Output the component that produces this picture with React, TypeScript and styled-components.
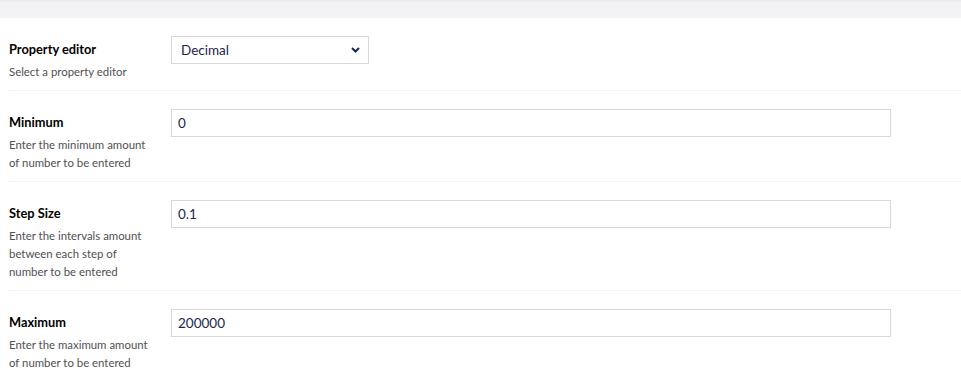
import React from "react";
import styled, { createGlobalStyle } from "styled-components";

const Global = createGlobalStyle`
  html, body { margin: 0; padding: 0; background: #fff; }
  body { font-family: Lato, "Open Sans", "Liberation Sans", sans-serif; color: #1b264f; }
  * { box-sizing: border-box; }
`;

const Page = styled.div`
  width: 961px;
  height: 380px;
  overflow: hidden;
  background: #fff;
`;

const TopBand = styled.div`
  height: 18px;
  background: #f3f3f5;
  border-top: 2px solid #ebebed;
`;

const Rows = styled.div`
  padding-left: 9px;
`;

const Row = styled.div`
  display: grid;
  grid-template-columns: 162px 720px;
  padding: 18px 0 9px;
  border-bottom: 1px solid #f3f3f5;
`;

const LabelCol = styled.div`
  display: flex;
  flex-direction: column;
`;

const Label = styled.label`
  padding-top: 3px;
  font-size: 12.8px;
  line-height: 20px;
  font-weight: 700;
  color: #000;
`;

const Description = styled.div<{ $wide?: boolean }>`
  margin-top: 4px;
  font-size: 11.4px;
  line-height: 18px;
  color: #515054;
  max-width: ${(p) => (p.$wide ? "160px" : "142px")};
`;

const Field = styled.div<{ $width?: number }>`
  position: relative;
  width: ${(p) => (p.$width ? `${p.$width}px` : "100%")};
  height: 28px;
`;

const TextInput = styled.input`
  width: 100%;
  height: 28px;
  border: 1px solid #d8d7d9;
  border-radius: 0;
  padding: 0 6px;
  font-family: Lato, "Open Sans", sans-serif;
  font-size: 13.5px;
  color: #1b264f;
  background: #fff;
  outline: none;
`;

const Select = styled.select`
  appearance: none;
  width: 100%;
  height: 28px;
  border: 1px solid #d8d7d9;
  border-radius: 0;
  padding: 0 9px;
  font-family: Lato, "Open Sans", sans-serif;
  font-size: 13.5px;
  color: #1b264f;
  background: #fff;
  outline: none;
`;

const Chevron = styled.svg`
  position: absolute;
  right: 9px;
  top: 11px;
  width: 9px;
  height: 6px;
  pointer-events: none;
`;

type Prop = { label: string; desc: string; value: string };

const props: Prop[] = [
  { label: "Minimum", desc: "Enter the minimum amount of number to be entered", value: "0" },
  {
    label: "Step Size",
    desc: "Enter the intervals amount between each step of number to be entered",
    value: "0.1",
  },
  { label: "Maximum", desc: "Enter the maximum amount of number to be entered", value: "200000" },
];

export default function App() {
  return (
    <Page>
      <Global />
      <TopBand />
      <Rows>
        <Row>
          <LabelCol>
            <Label>Property editor</Label>
            <Description $wide>Select a property editor</Description>
          </LabelCol>
          <Field $width={198}>
            <Select defaultValue="Decimal">
              <option>Decimal</option>
            </Select>
            <Chevron viewBox="0 0 9 6">
              <path d="M1 1 L4.5 4.5 L8 1" fill="none" stroke="#1b264f" strokeWidth="2" />
            </Chevron>
          </Field>
        </Row>
        {props.map((p) => (
          <Row key={p.label}>
            <LabelCol>
              <Label>{p.label}</Label>
              <Description>{p.desc}</Description>
            </LabelCol>
            <Field>
              <TextInput defaultValue={p.value} />
            </Field>
          </Row>
        ))}
      </Rows>
    </Page>
  );
}
